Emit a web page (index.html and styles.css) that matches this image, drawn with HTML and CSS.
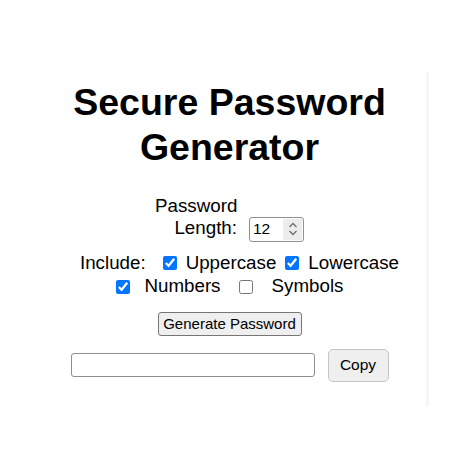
FILE: index.html
```html
<!DOCTYPE html>
<html lang="en">
<head>
  <meta charset="UTF-8">
  <meta name="viewport" content="width=device-width, initial-scale=1.0">
  <title>Secure Password Generator</title>
  <link rel="stylesheet" href="styles.css">
</head>
<body>

<div class="container">
  <h1>Secure Password Generator</h1>

  <div class="length-row"><label for="length" class="length-label">Password Length:</label><span class="number-wrap"><input type="number" id="length" class="length-input" value="12" min="4" max="64"><span class="spinner"><svg width="10" height="16" viewBox="0 0 10 16"><path d="M1.5 6 L5 2.5 L8.5 6 M1.5 10 L5 13.5 L8.5 10" fill="none" stroke="#6d6d6d" stroke-width="1.3"/></svg></span></span></div>

  <div class="options">
    <div class="options-row first">
      <span class="include">Include:</span>
      <label class="option"><input type="checkbox" id="uppercase" checked><span>Uppercase</span></label>
      <label class="option"><input type="checkbox" id="lowercase" checked><span>Lowercase</span></label>
    </div>
    <div class="options-row second">
      <label class="option wide"><input type="checkbox" id="numbers" checked><span>Numbers</span></label>
      <label class="option wide"><input type="checkbox" id="symbols"><span>Symbols</span></label>
    </div>
  </div>

  <div class="btn-container">
    <button class="generate-btn" onclick="generatePassword()">Generate Password</button>
  </div>

  <div class="output-row">
    <input type="text" id="password" class="password-output" readonly>
    <button class="copy-btn" onclick="copyPassword()">Copy</button>
  </div>
</div>

<script>
  // 產生密碼
  function generatePassword() {
    const length = parseInt(document.getElementById('length').value) || 12;
    let chars = '';
    if (document.getElementById('uppercase').checked) chars += 'ABCDEFGHIJKLMNOPQRSTUVWXYZ';
    if (document.getElementById('lowercase').checked) chars += 'abcdefghijklmnopqrstuvwxyz';
    if (document.getElementById('numbers').checked) chars += '0123456789';
    if (document.getElementById('symbols').checked) chars += '!@#$%^&*()_+-=[]{}';
    if (!chars) return;

    let result = '';
    for (let i = 0; i < length; i++) {
      result += chars.charAt(Math.floor(Math.random() * chars.length));
    }
    document.getElementById('password').value = result;
  }

  // 複製到剪貼簿
  function copyPassword() {
    const output = document.getElementById('password');
    output.select();
    document.execCommand('copy');
  }
</script>

</body>
</html>
```

FILE: styles.css
```css
body {
  font-family: 'Liberation Sans', Arial, Helvetica, sans-serif;
  background-color: #fff;
  color: #000;
  margin: 0;
  padding: 0;
}
.container {
  width: 396px;
  margin: 72px 0 0 33px;
  padding: 8px 0 24px;
  box-sizing: border-box;
  border-right: 3px solid #f5f5f5;
  font-size: 18.75px;
  text-align: center;
}
h1 {
  font-size: 37.5px;
  line-height: 45px;
  margin: 0;
}
.length-row {
  margin-top: 25px;
  text-align: center;
}
.length-label {
  display: inline-block;
  width: 82px;
  text-align: right;
}
.number-wrap {
  position: relative;
  display: inline-block;
  margin-left: 12px;
}
.length-input {
  width: 55px;
  height: 25px;
  box-sizing: border-box;
  font-family: 'Liberation Sans', Arial, sans-serif;
  font-size: 15.5px;
  padding: 1px 3px;
  border: 1px solid #8f8f8f;
  border-radius: 3px;
}
.length-input::-webkit-inner-spin-button,
.length-input::-webkit-outer-spin-button {
  -webkit-appearance: none;
  margin: 0;
}
.spinner {
  position: absolute;
  top: 2px;
  right: 2px;
  width: 19px;
  height: 21px;
  background-color: #ececec;
  display: flex;
  align-items: center;
  justify-content: center;
  pointer-events: none;
}
.options {
  margin-top: 9px;
}
.options-row {
  display: flex;
  justify-content: center;
  align-items: center;
  height: 23.5px;
  line-height: 23.5px;
}
.options-row.first {
  padding-left: 20px;
  gap: 9px;
}
.options-row.second {
  gap: 18px;
}
.include {
  margin-right: 8px;
}
.option {
  display: flex;
  align-items: center;
  gap: 9px;
}
.option.wide {
  width: 105px;
  justify-content: space-between;
}
.option input {
  width: 14px;
  height: 14px;
  margin: 2px 0 0;
}
.btn-container {
  margin-top: 14px;
}
.generate-btn {
  width: 144px;
  height: 24px;
  font-family: 'Liberation Sans', Arial, sans-serif;
  font-size: 15px;
  padding: 0;
  color: #000;
  background-color: #efefef;
  border: 1px solid #767676;
  border-radius: 3px;
  cursor: pointer;
}
.output-row {
  display: flex;
  justify-content: center;
  align-items: center;
  gap: 13px;
  margin-top: 13px;
}
.password-output {
  width: 244px;
  height: 24px;
  box-sizing: border-box;
  border: 1px solid #8f8f8f;
  border-radius: 3px;
  font-size: 15px;
}
.copy-btn {
  width: 61px;
  height: 33px;
  font-family: 'Liberation Sans', Arial, sans-serif;
  font-size: 15.5px;
  color: #000;
  background-color: #efefef;
  border: 1px solid #c4c4c4;
  border-radius: 5px;
  cursor: pointer;
}
```
